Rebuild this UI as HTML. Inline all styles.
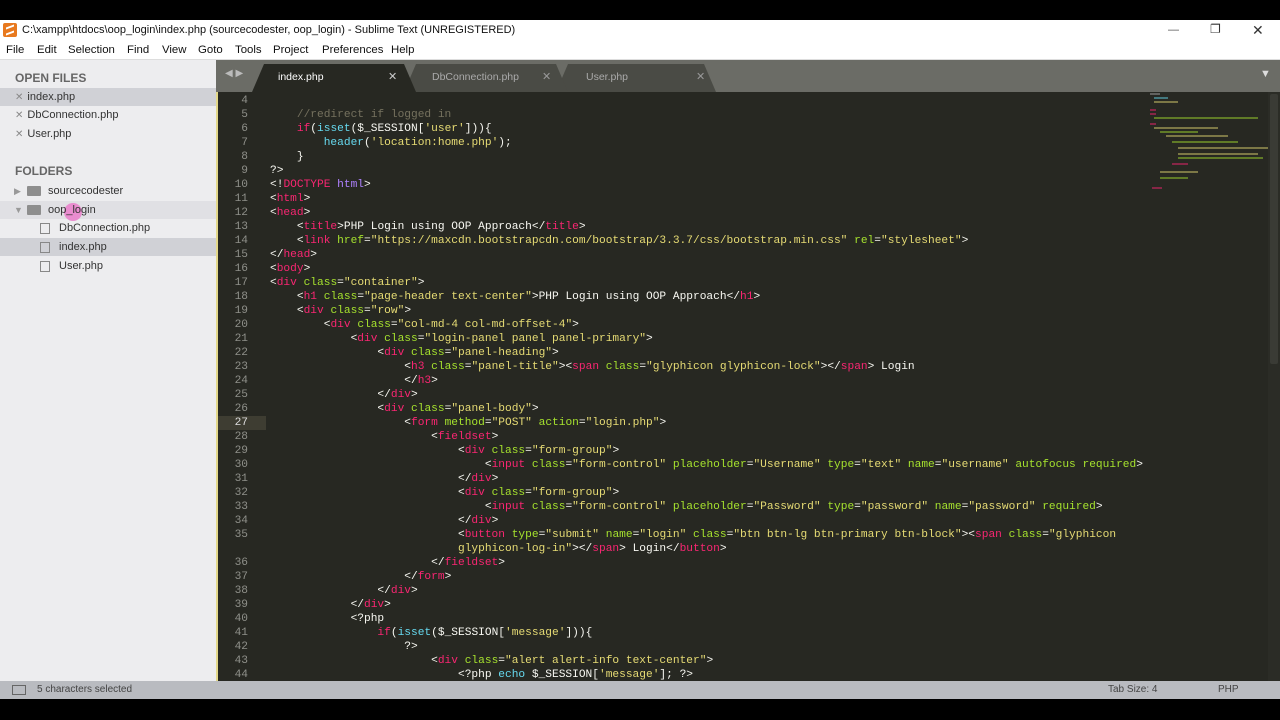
<!DOCTYPE html>
<html><head><meta charset="utf-8">
<style>
*{margin:0;padding:0;box-sizing:border-box}
body{width:1280px;height:720px;background:#000;position:relative;overflow:hidden;font-family:"Liberation Sans",sans-serif}
.abs{position:absolute}
#title{left:0;top:20px;width:1280px;height:20px;background:#fff;font-size:11px;color:#111;line-height:20px}
#menu{left:0;top:40px;width:1280px;height:20px;background:#fff;font-size:11.4px;color:#111;line-height:20px;border-bottom:1px solid #ddd}
#menu span{position:absolute;top:0}
#side{left:0;top:60px;width:216px;height:621px;background:#ededef;font-size:11px;color:#333}
.hd{position:absolute;left:15px;font-size:12px;font-weight:bold;color:#666}
.row{position:absolute;left:0;width:216px;height:18px;line-height:18px}
.sel{background:#d0d1d6}
.x{color:#888;margin-left:15px;margin-right:4px;font-size:10px}
#strip{left:216px;top:92px;width:2px;height:589px;background:#e3d88a}
#tabs{left:216px;top:60px;width:1064px;height:32px;background:#6b6c66}
#ed{left:218px;top:92px;width:1062px;height:589px;background:#272822;overflow:hidden}
#code{position:absolute;left:0;top:2px;font-family:"Liberation Mono",monospace;font-size:11.2px;line-height:14px;color:#f8f8f2;width:1050px}
.r{height:14px;position:relative;white-space:pre}
.n{position:absolute;left:0;width:30px;text-align:right;color:#8f908a}
.c{position:absolute;left:52px;white-space:pre}
.t{color:#f92672}.a{color:#a6e22e}.s{color:#e6db74}.k{color:#66d9ef}.m{color:#75715e}.p{color:#ae81ff}
#status{left:0;top:681px;width:1280px;height:18px;background:#b9bbc0;font-size:10px;color:#444;line-height:18px}
</style></head><body>
<div id="title" class="abs"><div class="abs" style="left:3px;top:3px;width:14px;height:14px;background:#e8791f;border-radius:2px"><div class="abs" style="left:3px;top:3px;width:8px;height:8px;border-top:2px solid #fff;border-bottom:2px solid #fff;transform:skewY(-20deg)"></div></div><span class="abs" style="left:22px">C:\xampp\htdocs\oop_login\index.php (sourcecodester, oop_login) - Sublime Text (UNREGISTERED)</span>
<span class="abs" style="left:1168px;top:0;color:#555">—</span><span class="abs" style="left:1210px;top:-1px;font-size:12px;color:#333">❐</span><span class="abs" style="left:1252px;top:0;font-size:14px;color:#333">✕</span></div>
<div id="menu" class="abs"><span style="left:6px">File</span><span style="left:37px">Edit</span><span style="left:68px">Selection</span><span style="left:127px">Find</span><span style="left:162px">View</span><span style="left:198px">Goto</span><span style="left:235px">Tools</span><span style="left:273px">Project</span><span style="left:322px">Preferences</span><span style="left:391px">Help</span></div>
<div id="side" class="abs">
<div class="hd" style="top:11px">OPEN FILES</div>
<div class="row sel" style="top:28px"><span class="x">✕</span>index.php</div>
<div class="row" style="top:46px"><span class="x">✕</span>DbConnection.php</div>
<div class="row" style="top:65px"><span class="x">✕</span>User.php</div>
<div class="hd" style="top:104px">FOLDERS</div>
<div class="row" style="top:122px"><span class="abs" style="left:14px;color:#999;font-size:9px">▶</span><span class="abs" style="left:27px;top:4px;width:14px;height:10px;background:#8e8e8e;border-radius:1px"></span><span class="abs" style="left:48px">sourcecodester</span></div>
<div class="row sel" style="top:141px;background:#e0e0e4"><span class="abs" style="left:14px;color:#999;font-size:9px">▼</span><span class="abs" style="left:27px;top:4px;width:14px;height:10px;background:#8e8e8e;border-radius:1px"></span><span class="abs" style="left:64px;top:2px;width:18px;height:18px;border-radius:9px;background:#e98ccf"></span><span class="abs" style="left:48px">oop_login</span></div>
<div class="row" style="top:159px"><span class="abs" style="left:40px;top:4px;width:10px;height:11px;border:1px solid #888"></span><span class="abs" style="left:59px">DbConnection.php</span></div>
<div class="row sel" style="top:178px"><span class="abs" style="left:40px;top:4px;width:10px;height:11px;border:1px solid #888"></span><span class="abs" style="left:59px">index.php</span></div>
<div class="row" style="top:197px"><span class="abs" style="left:40px;top:4px;width:10px;height:11px;border:1px solid #888"></span><span class="abs" style="left:59px">User.php</span></div>
</div>
<div id="strip" class="abs"></div>
<div id="tabs" class="abs">
<span class="abs" style="left:9px;top:8px;color:#bbb;font-size:10px">◀ ▶</span>
<svg class="abs" style="left:0;top:0" width="1064" height="32">
<polygon points="340,32 352,4 488,4 500,32" fill="#4a4b45"/>
<polygon points="188,32 200,4 340,4 352,32" fill="#4a4b45"/>
<polygon points="36,32 48,4 188,4 200,32" fill="#272822"/>
</svg>
<span class="abs" style="left:62px;top:11px;font-size:10.5px;color:#fff">index.php</span><span class="abs" style="left:172px;top:10px;font-size:11px;color:#ccc">✕</span>
<span class="abs" style="left:216px;top:11px;font-size:10.5px;color:#aaa">DbConnection.php</span><span class="abs" style="left:326px;top:10px;font-size:11px;color:#999">✕</span>
<span class="abs" style="left:370px;top:11px;font-size:10.5px;color:#aaa">User.php</span><span class="abs" style="left:480px;top:10px;font-size:11px;color:#999">✕</span>
<span class="abs" style="left:1044px;top:8px;color:#ddd;font-size:11px">▼</span>
</div>
<div id="ed" class="abs">
<div class="abs" style="left:0;top:324px;width:48px;height:14px;background:#3e3d32"></div>
<div id="code">
<div class="r"><span class="n">4</span><span class="c"></span></div>
<div class="r"><span class="n">5</span><span class="c">    <span class="m">//redirect if logged in</span></span></div>
<div class="r"><span class="n">6</span><span class="c">    <span class="t">if</span>(<span class="k">isset</span>($_SESSION[<span class="s">'user'</span>])){</span></div>
<div class="r"><span class="n">7</span><span class="c">        <span class="k">header</span>(<span class="s">'location:home.php'</span>);</span></div>
<div class="r"><span class="n">8</span><span class="c">    }</span></div>
<div class="r"><span class="n">9</span><span class="c">?></span></div>
<div class="r"><span class="n">10</span><span class="c">&lt;!<span class="t">DOCTYPE</span> <span class="p">html</span>></span></div>
<div class="r"><span class="n">11</span><span class="c">&lt;<span class="t">html</span>></span></div>
<div class="r"><span class="n">12</span><span class="c">&lt;<span class="t">head</span>></span></div>
<div class="r"><span class="n">13</span><span class="c">    &lt;<span class="t">title</span>>PHP Login using OOP Approach&lt;/<span class="t">title</span>></span></div>
<div class="r"><span class="n">14</span><span class="c">    &lt;<span class="t">link</span> <span class="a">href</span>=<span class="s">"https://maxcdn.bootstrapcdn.com/bootstrap/3.3.7/css/bootstrap.min.css"</span> <span class="a">rel</span>=<span class="s">"stylesheet"</span>></span></div>
<div class="r"><span class="n">15</span><span class="c">&lt;/<span class="t">head</span>></span></div>
<div class="r"><span class="n">16</span><span class="c">&lt;<span class="t">body</span>></span></div>
<div class="r"><span class="n">17</span><span class="c">&lt;<span class="t">div</span> <span class="a">class</span>=<span class="s">"container"</span>></span></div>
<div class="r"><span class="n">18</span><span class="c">    &lt;<span class="t">h1</span> <span class="a">class</span>=<span class="s">"page-header text-center"</span>>PHP Login using OOP Approach&lt;/<span class="t">h1</span>></span></div>
<div class="r"><span class="n">19</span><span class="c">    &lt;<span class="t">div</span> <span class="a">class</span>=<span class="s">"row"</span>></span></div>
<div class="r"><span class="n">20</span><span class="c">        &lt;<span class="t">div</span> <span class="a">class</span>=<span class="s">"col-md-4 col-md-offset-4"</span>></span></div>
<div class="r"><span class="n">21</span><span class="c">            &lt;<span class="t">div</span> <span class="a">class</span>=<span class="s">"login-panel panel panel-primary"</span>></span></div>
<div class="r"><span class="n">22</span><span class="c">                &lt;<span class="t">div</span> <span class="a">class</span>=<span class="s">"panel-heading"</span>></span></div>
<div class="r"><span class="n">23</span><span class="c">                    &lt;<span class="t">h3</span> <span class="a">class</span>=<span class="s">"panel-title"</span>>&lt;<span class="t">span</span> <span class="a">class</span>=<span class="s">"glyphicon glyphicon-lock"</span>>&lt;/<span class="t">span</span>> Login</span></div>
<div class="r"><span class="n">24</span><span class="c">                    &lt;/<span class="t">h3</span>></span></div>
<div class="r"><span class="n">25</span><span class="c">                &lt;/<span class="t">div</span>></span></div>
<div class="r"><span class="n">26</span><span class="c">                &lt;<span class="t">div</span> <span class="a">class</span>=<span class="s">"panel-body"</span>></span></div>
<div class="r"><span class="n" style="color:#ddd">27</span><span class="c">                    &lt;<span class="t">form</span> <span class="a">method</span>=<span class="s">"POST"</span> <span class="a">action</span>=<span class="s">"login.php"</span>></span></div>
<div class="r"><span class="n">28</span><span class="c">                        &lt;<span class="t">fieldset</span>></span></div>
<div class="r"><span class="n">29</span><span class="c">                            &lt;<span class="t">div</span> <span class="a">class</span>=<span class="s">"form-group"</span>></span></div>
<div class="r"><span class="n">30</span><span class="c">                                &lt;<span class="t">input</span> <span class="a">class</span>=<span class="s">"form-control"</span> <span class="a">placeholder</span>=<span class="s">"Username"</span> <span class="a">type</span>=<span class="s">"text"</span> <span class="a">name</span>=<span class="s">"username"</span> <span class="a">autofocus</span> <span class="a">required</span>></span></div>
<div class="r"><span class="n">31</span><span class="c">                            &lt;/<span class="t">div</span>></span></div>
<div class="r"><span class="n">32</span><span class="c">                            &lt;<span class="t">div</span> <span class="a">class</span>=<span class="s">"form-group"</span>></span></div>
<div class="r"><span class="n">33</span><span class="c">                                &lt;<span class="t">input</span> <span class="a">class</span>=<span class="s">"form-control"</span> <span class="a">placeholder</span>=<span class="s">"Password"</span> <span class="a">type</span>=<span class="s">"password"</span> <span class="a">name</span>=<span class="s">"password"</span> <span class="a">required</span>></span></div>
<div class="r"><span class="n">34</span><span class="c">                            &lt;/<span class="t">div</span>></span></div>
<div class="r"><span class="n">35</span><span class="c">                            &lt;<span class="t">button</span> <span class="a">type</span>=<span class="s">"submit"</span> <span class="a">name</span>=<span class="s">"login"</span> <span class="a">class</span>=<span class="s">"btn btn-lg btn-primary btn-block"</span>>&lt;<span class="t">span</span> <span class="a">class</span>=<span class="s">"glyphicon</span></span></div>
<div class="r"><span class="n"></span><span class="c"><span class="s">                            glyphicon-log-in"</span>>&lt;/<span class="t">span</span>> Login&lt;/<span class="t">button</span>></span></div>
<div class="r"><span class="n">36</span><span class="c">                        &lt;/<span class="t">fieldset</span>></span></div>
<div class="r"><span class="n">37</span><span class="c">                    &lt;/<span class="t">form</span>></span></div>
<div class="r"><span class="n">38</span><span class="c">                &lt;/<span class="t">div</span>></span></div>
<div class="r"><span class="n">39</span><span class="c">            &lt;/<span class="t">div</span>></span></div>
<div class="r"><span class="n">40</span><span class="c">            &lt;?php</span></div>
<div class="r"><span class="n">41</span><span class="c">                <span class="t">if</span>(<span class="k">isset</span>($_SESSION[<span class="s">'message'</span>])){</span></div>
<div class="r"><span class="n">42</span><span class="c">                    ?></span></div>
<div class="r"><span class="n">43</span><span class="c">                        &lt;<span class="t">div</span> <span class="a">class</span>=<span class="s">"alert alert-info text-center"</span>></span></div>
<div class="r"><span class="n">44</span><span class="c">                            &lt;?php <span class="k">echo</span> $_SESSION[<span class="s">'message'</span>]; ?></span></div>
</div>
<svg class="abs" style="left:930px;top:0" width="125" height="110" opacity="0.6">
<g stroke-width="1.5">
<line x1="2" y1="2" x2="12" y2="2" stroke="#aaa"/><line x1="6" y1="6" x2="20" y2="6" stroke="#66d9ef"/><line x1="6" y1="10" x2="30" y2="10" stroke="#e6db74"/>
<line x1="2" y1="18" x2="8" y2="18" stroke="#f92672"/><line x1="2" y1="22" x2="8" y2="22" stroke="#f92672"/><line x1="6" y1="26" x2="110" y2="26" stroke="#a6e22e"/>
<line x1="2" y1="32" x2="8" y2="32" stroke="#f92672"/><line x1="6" y1="36" x2="70" y2="36" stroke="#e6db74"/><line x1="12" y1="40" x2="50" y2="40" stroke="#a6e22e"/>
<line x1="18" y1="44" x2="80" y2="44" stroke="#e6db74"/><line x1="24" y1="50" x2="90" y2="50" stroke="#a6e22e"/><line x1="30" y1="56" x2="120" y2="56" stroke="#e6db74"/>
<line x1="30" y1="62" x2="110" y2="62" stroke="#e6db74"/><line x1="30" y1="66" x2="115" y2="66" stroke="#a6e22e"/><line x1="24" y1="72" x2="40" y2="72" stroke="#f92672"/>
<line x1="12" y1="80" x2="50" y2="80" stroke="#e6db74"/><line x1="12" y1="86" x2="40" y2="86" stroke="#a6e22e"/><line x1="4" y1="96" x2="14" y2="96" stroke="#f92672"/>
</g></svg>
<div class="abs" style="left:1050px;top:0;width:12px;height:589px;background:#2b2c26"></div>
<div class="abs" style="left:1052px;top:2px;width:8px;height:270px;background:#3a3b35;border-radius:2px"></div>
</div>
<div id="status" class="abs"><span class="abs" style="left:12px;top:4px;width:14px;height:10px;border:1px solid #666"></span><span class="abs" style="left:37px">5 characters selected</span><span class="abs" style="left:1108px">Tab Size: 4</span><span class="abs" style="left:1218px">PHP</span></div>
</body></html>
